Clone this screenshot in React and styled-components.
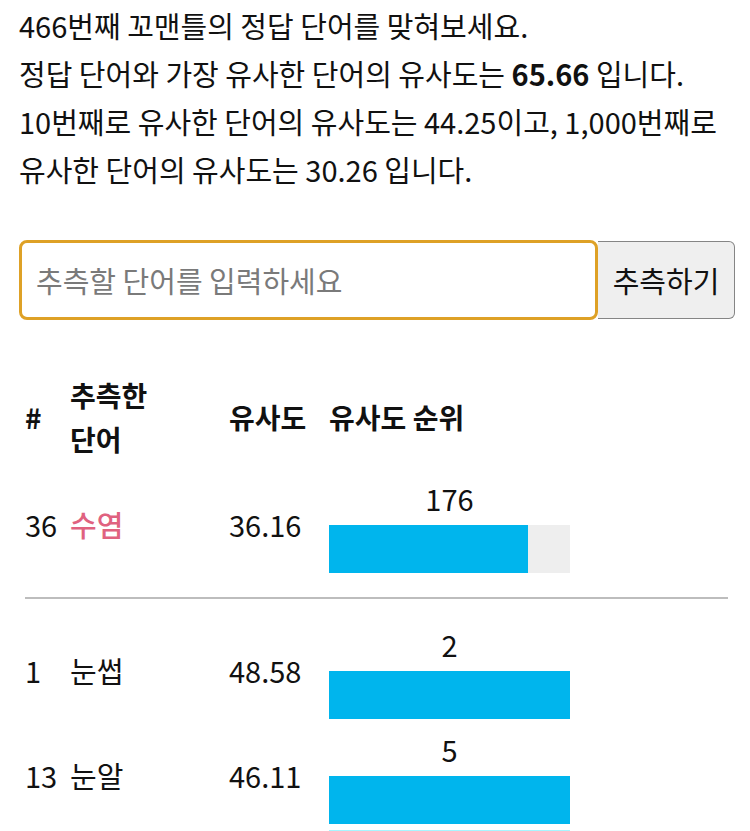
import React from "react";
import styled, { createGlobalStyle } from "styled-components";

const Global = createGlobalStyle`
  html, body { margin: 0; padding: 0; background: #fff; }
  body {
    font-family: "Noto Sans CJK KR", "Noto Sans", sans-serif;
    color: #111;
    overflow: hidden;
  }
`;

const Page = styled.div`
  padding: 1px 15px 0 19px;
  width: 750px;
  height: 831px;
  box-sizing: border-box;
  overflow: hidden;
`;

const Intro = styled.p`
  margin: 0;
  font-size: 29px;
  line-height: 48px;
  white-space: nowrap;
`;

const Strong = styled.b`
  font-weight: 700;
`;

const Form = styled.form`
  display: flex;
  align-items: center;
  margin-top: 47px;
`;

const Input = styled.input`
  width: 579px;
  height: 80px;
  box-sizing: border-box;
  border: 3px solid #dea126;
  border-radius: 8px;
  padding: 0 14px;
  font-family: inherit;
  font-size: 29px;
  color: #111;
  outline: none;
  &::placeholder { color: #7a7a7a; }
`;

const Button = styled.button`
  width: 137px;
  height: 78px;
  box-sizing: border-box;
  background: #efefef;
  border: 1.5px solid #858585;
  border-left: none;
  border-radius: 0 6px 6px 0;
  font-family: inherit;
  font-size: 29px;
  color: #111;
  padding: 0;
`;

const Table = styled.div`
  margin-top: 56px;
  display: grid;
  grid-template-columns: 45px 159px 100px 241px;
  padding-left: 6px;
  align-items: center;
`;

const Head = styled.div`
  font-weight: 700;
  font-size: 28px;
  line-height: 44px;
  margin-top: -3px;
  max-width: ${(p) => p.$max || "none"};
  white-space: ${(p) => (p.$max ? "normal" : "nowrap")};
`;

const Cell = styled.div`
  font-size: 29px;
  line-height: 48px;
  white-space: nowrap;
  color: ${(p) => (p.$highlight ? "#e0627f" : "#111")};
  font-weight: ${(p) => (p.$highlight ? 500 : 400)};
  margin-top: -3px;
`;

const RankCell = styled.div`
  display: flex;
  flex-direction: column;
`;

const RankLabel = styled.div`
  font-size: 29px;
  line-height: 48px;
  text-align: center;
  margin-top: -3px;
  margin-bottom: 3px;
`;

const Track = styled.div`
  height: 48px;
  background: #eeeeee;
`;

const Fill = styled.div`
  height: 100%;
  background: ${(p) => p.$color || "#00b5ed"};
`;

const Divider = styled.div`
  grid-column: 1 / -1;
  height: 2px;
  background: #bdbdbd;
  margin: 24px 0;
  width: 703px;
`;

const Spacer = styled.div`
  grid-column: 1 / -1;
  height: ${(p) => p.$h}px;
`;

function Row({ n, word, sim, rank, pct, color, highlight, noLabel }) {
  return (
    <>
      <Cell>{n}</Cell>
      <Cell $highlight={highlight}>{word}</Cell>
      <Cell>{sim}</Cell>
      <RankCell>
        {!noLabel && <RankLabel>{rank}</RankLabel>}
        <Track>
          <Fill $color={color} style={{ width: `${pct}%` }} />
        </Track>
      </RankCell>
    </>
  );
}

export default function App() {
  return (
    <>
      <Global />
      <Page>
        <Intro>
          466번째 꼬맨틀의 정답 단어를 맞혀보세요.
          <br />
          정답 단어와 가장 유사한 단어의 유사도는 <Strong>65.66</Strong> 입니다.
          <br />
          10번째로 유사한 단어의 유사도는 44.25이고, 1,000번째로
          <br />
          유사한 단어의 유사도는 30.26 입니다.
        </Intro>
        <Form onSubmit={(e) => e.preventDefault()}>
          <Input placeholder="추측할 단어를 입력하세요" />
          <Button type="submit">추측하기</Button>
        </Form>
        <Table>
          <Head>#</Head>
          <Head $max="100px">추측한 단어</Head>
          <Head>유사도</Head>
          <Head>유사도 순위</Head>
          <Spacer $h={16} />
          <Row n="36" word="수염" sim="36.16" rank="176" pct={82.5} highlight />
          <Divider />
          <Row n="1" word="눈썹" sim="48.58" rank="2" pct={100} />
          <Spacer $h={9} />
          <Row n="13" word="눈알" sim="46.11" rank="5" pct={100} />
          <Spacer $h={6} />
          <Row n="" word="" sim="" rank="" pct={100} noLabel color="#a6f6ff" />
        </Table>
      </Page>
    </>
  );
}
